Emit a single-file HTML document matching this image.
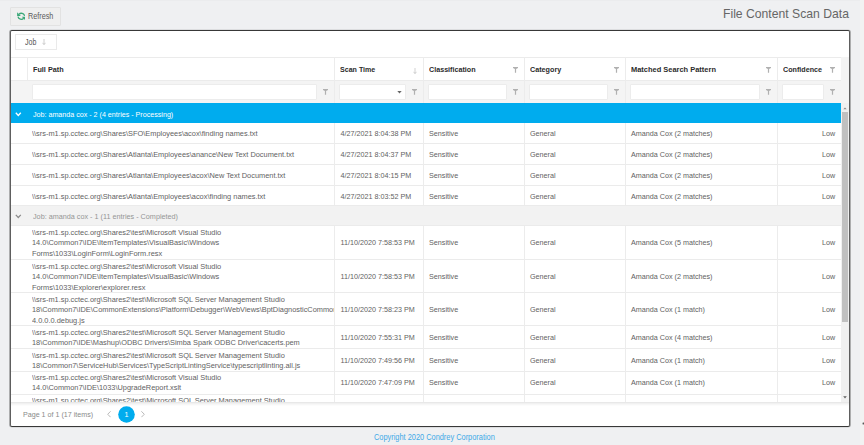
<!DOCTYPE html>
<html><head><meta charset="utf-8"><title>File Content Scan Data</title>
<style>
html,body{margin:0;padding:0}
body{width:864px;height:445px;position:relative;overflow:hidden;background:#eff0f2;font-family:"Liberation Sans",sans-serif}
.r{position:absolute}
.t{position:absolute;white-space:nowrap;line-height:12px;transform-origin:0 0}
</style></head><body>
<div class="r" style="left:0px;top:0px;width:860px;height:1px;background:#ebecee"></div>
<div class="r" style="left:860px;top:0px;width:4px;height:445px;background:#f2f2f2"></div>
<div class="r" style="left:10px;top:7px;width:49px;height:17px;background:#efefef;border:1px solid #e2e2e2;border-radius:1px"></div>
<svg class="r" style="left:16.8px;top:11.7px" width="8.6" height="8.6" viewBox="0 0 8.6 8.6">
<path d="M1.9 2.4 A3.35 3.35 0 0 1 7.65 3.9" fill="none" stroke="#3ba878" stroke-width="1.3"/>
<path d="M6.7 6.2 A3.35 3.35 0 0 1 0.95 4.7" fill="none" stroke="#3ba878" stroke-width="1.3"/>
<path d="M0.1 0.2 L0.1 3.9 L3.8 3.9 Z" fill="#3ba878"/>
<path d="M8.5 8.4 L8.5 4.7 L4.8 4.7 Z" fill="#3ba878"/>
</svg>
<div class="t" style="left:27.8px;top:11px;font-size:8.2px;color:#5a5a5a;transform:scaleX(0.8846);">Refresh</div>
<div class="t" style="left:723.4px;top:8px;font-size:13.4px;color:#666;transform:scaleX(0.9095);">File Content Scan Data</div>
<div class="r" style="left:10px;top:30px;width:838px;height:395px;background:#fff;border:1px solid #383838;border-left-color:#5e5e5e;border-right-color:#5e5e5e;border-radius:2px;box-shadow:-1px 0 0 rgba(0,0,0,0.28),1px 0 0 rgba(0,0,0,0.28),0 -1px 0 rgba(0,0,0,0.08),0 1px 0 rgba(0,0,0,0.08)"></div>
<div class="r" style="left:15px;top:34px;width:40px;height:14px;border:1px solid #eaeaea;background:#fff"></div>
<div class="t" style="left:24.6px;top:37px;font-size:8.2px;color:#565656;transform:scaleX(0.8623);">Job</div>
<svg class="r" style="left:42px;top:39px" width="4" height="6" viewBox="0 0 4 6"><path d="M2 0 V5.6 M0.5 3.8 L2 5.6 L3.5 3.8" fill="none" stroke="#c8c8c8" stroke-width="0.9"/></svg>
<div class="r" style="left:11px;top:57px;width:830px;height:1px;background:#ebebeb"></div>
<div class="r" style="left:11px;top:80px;width:830px;height:1px;background:#ebebeb"></div>
<div class="r" style="left:11px;top:81px;width:830px;height:22px;background:#f4f4f4"></div>
<div class="r" style="left:841px;top:57px;width:8px;height:46px;background:#f4f4f4"></div>
<div class="r" style="left:27px;top:57px;width:1px;height:23px;background:#ececec"></div>
<div class="r" style="left:334px;top:57px;width:1px;height:46px;background:#ececec"></div>
<div class="r" style="left:423px;top:57px;width:1px;height:46px;background:#ececec"></div>
<div class="r" style="left:524px;top:57px;width:1px;height:46px;background:#ececec"></div>
<div class="r" style="left:625px;top:57px;width:1px;height:46px;background:#ececec"></div>
<div class="r" style="left:777px;top:57px;width:1px;height:46px;background:#ececec"></div>
<div class="t" style="left:33px;top:64px;font-size:7.6px;color:#2b2b2b;font-weight:bold;transform:scaleX(0.9536);">Full Path</div>
<div class="r" style="left:32px;top:84px;width:284.5px;height:16px;background:#fff;border:1px solid #ececec;box-sizing:border-box;border-radius:1px"></div>
<svg class="r" style="left:323.0px;top:89.3px" width="5" height="6" viewBox="0 0 5 6"><path d="M0 0 H5 V0.9 L3.1 2.1 V5.8 H1.9 V2.1 L0 0.9 Z" fill="#b0b0b0"/></svg>
<div class="t" style="left:340px;top:64px;font-size:7.6px;color:#2b2b2b;font-weight:bold;transform:scaleX(0.9320);">Scan Time</div>
<svg class="r" style="left:412.5px;top:67.5px" width="4" height="6" viewBox="0 0 4 6"><path d="M2 0 V5.6 M0.5 3.8 L2 5.6 L3.5 3.8" fill="none" stroke="#cccccc" stroke-width="0.9"/></svg>
<div class="r" style="left:339px;top:84px;width:66.5px;height:16px;background:#fff;border:1px solid #ececec;box-sizing:border-box;border-radius:1px"></div>
<svg class="r" style="left:412.0px;top:89.3px" width="5" height="6" viewBox="0 0 5 6"><path d="M0 0 H5 V0.9 L3.1 2.1 V5.8 H1.9 V2.1 L0 0.9 Z" fill="#b0b0b0"/></svg>
<svg class="r" style="left:396.5px;top:91px" width="5" height="3" viewBox="0 0 5 3"><path d="M0.3 0 H4.7 L2.5 2.6 Z" fill="#666"/></svg>
<div class="t" style="left:429px;top:64px;font-size:7.6px;color:#2b2b2b;font-weight:bold;transform:scaleX(0.9430);">Classification</div>
<svg class="r" style="left:513.0px;top:67px" width="5" height="6" viewBox="0 0 5 6"><path d="M0 0 H5 V0.9 L3.1 2.1 V5.8 H1.9 V2.1 L0 0.9 Z" fill="#b0b0b0"/></svg>
<div class="r" style="left:428px;top:84px;width:78.5px;height:16px;background:#fff;border:1px solid #ececec;box-sizing:border-box;border-radius:1px"></div>
<svg class="r" style="left:513.0px;top:89.3px" width="5" height="6" viewBox="0 0 5 6"><path d="M0 0 H5 V0.9 L3.1 2.1 V5.8 H1.9 V2.1 L0 0.9 Z" fill="#b0b0b0"/></svg>
<div class="t" style="left:530px;top:64px;font-size:7.6px;color:#2b2b2b;font-weight:bold;transform:scaleX(0.9474);">Category</div>
<svg class="r" style="left:614.0px;top:67px" width="5" height="6" viewBox="0 0 5 6"><path d="M0 0 H5 V0.9 L3.1 2.1 V5.8 H1.9 V2.1 L0 0.9 Z" fill="#b0b0b0"/></svg>
<div class="r" style="left:529px;top:84px;width:78.5px;height:16px;background:#fff;border:1px solid #ececec;box-sizing:border-box;border-radius:1px"></div>
<svg class="r" style="left:614.0px;top:89.3px" width="5" height="6" viewBox="0 0 5 6"><path d="M0 0 H5 V0.9 L3.1 2.1 V5.8 H1.9 V2.1 L0 0.9 Z" fill="#b0b0b0"/></svg>
<div class="t" style="left:631px;top:64px;font-size:7.6px;color:#2b2b2b;font-weight:bold;transform:scaleX(0.9817);">Matched Search Pattern</div>
<svg class="r" style="left:766.0px;top:67px" width="5" height="6" viewBox="0 0 5 6"><path d="M0 0 H5 V0.9 L3.1 2.1 V5.8 H1.9 V2.1 L0 0.9 Z" fill="#b0b0b0"/></svg>
<div class="r" style="left:630px;top:84px;width:129.5px;height:16px;background:#fff;border:1px solid #ececec;box-sizing:border-box;border-radius:1px"></div>
<svg class="r" style="left:766.0px;top:89.3px" width="5" height="6" viewBox="0 0 5 6"><path d="M0 0 H5 V0.9 L3.1 2.1 V5.8 H1.9 V2.1 L0 0.9 Z" fill="#b0b0b0"/></svg>
<div class="t" style="left:783px;top:64px;font-size:7.6px;color:#2b2b2b;font-weight:bold;transform:scaleX(0.9425);">Confidence</div>
<svg class="r" style="left:830.0px;top:67px" width="5" height="6" viewBox="0 0 5 6"><path d="M0 0 H5 V0.9 L3.1 2.1 V5.8 H1.9 V2.1 L0 0.9 Z" fill="#b0b0b0"/></svg>
<div class="r" style="left:782px;top:84px;width:41.5px;height:16px;background:#fff;border:1px solid #ececec;box-sizing:border-box;border-radius:1px"></div>
<svg class="r" style="left:830.0px;top:89.3px" width="5" height="6" viewBox="0 0 5 6"><path d="M0 0 H5 V0.9 L3.1 2.1 V5.8 H1.9 V2.1 L0 0.9 Z" fill="#b0b0b0"/></svg>
<div class="r" style="left:11px;top:103px;width:830px;height:20px;background:#00acee"></div>
<svg class="r" style="left:15px;top:111.5px" width="7" height="5" viewBox="0 0 7 5"><path d="M0.8 0.8 L3.3 3.5 L5.8 0.8" fill="none" stroke="#fff" stroke-width="1.3"/></svg>
<div class="t" style="left:32.7px;top:109px;font-size:7.4px;color:#fff;transform:scaleX(0.9643);">Job: amanda cox - 2 (4 entries - Processing)</div>
<div class="r" style="left:11px;top:103px;width:830px;height:299px;overflow:hidden">
<div class="t" style="left:21px;top:25px;font-size:7.4px;color:#626262;width:302px;overflow:hidden">\\srs-m1.sp.cctec.org\Shares\SFO\Employees\acox\finding names.txt</div>
<div class="t" style="left:329.5px;top:25px;font-size:7.2px;color:#626262;">4/27/2021 8:04:38 PM</div>
<div class="t" style="left:418px;top:25px;font-size:7.2px;color:#626262;">Sensitive</div>
<div class="t" style="left:519px;top:25px;font-size:7.2px;color:#626262;">General</div>
<div class="t" style="left:620px;top:25px;font-size:7.2px;color:#626262;">Amanda Cox (2 matches)</div>
<div class="t" style="left:766px;width:58.3px;text-align:right;top:25px;font-size:7.2px;color:#626262">Low</div>
<div class="r" style="left:0px;top:40px;width:830px;height:1px;background:#ebebeb"></div>
<div class="r" style="left:323px;top:20px;width:1px;height:20px;background:#ececec"></div>
<div class="r" style="left:412px;top:20px;width:1px;height:20px;background:#ececec"></div>
<div class="r" style="left:513px;top:20px;width:1px;height:20px;background:#ececec"></div>
<div class="r" style="left:614px;top:20px;width:1px;height:20px;background:#ececec"></div>
<div class="r" style="left:766px;top:20px;width:1px;height:20px;background:#ececec"></div>
<div class="t" style="left:21px;top:46px;font-size:7.4px;color:#626262;width:302px;overflow:hidden">\\srs-m1.sp.cctec.org\Shares\Atlanta\Employees\anance\New Text Document.txt</div>
<div class="t" style="left:329.5px;top:46px;font-size:7.2px;color:#626262;">4/27/2021 8:04:37 PM</div>
<div class="t" style="left:418px;top:46px;font-size:7.2px;color:#626262;">Sensitive</div>
<div class="t" style="left:519px;top:46px;font-size:7.2px;color:#626262;">General</div>
<div class="t" style="left:620px;top:46px;font-size:7.2px;color:#626262;">Amanda Cox (2 matches)</div>
<div class="t" style="left:766px;width:58.3px;text-align:right;top:46px;font-size:7.2px;color:#626262">Low</div>
<div class="r" style="left:0px;top:61px;width:830px;height:1px;background:#ebebeb"></div>
<div class="r" style="left:323px;top:40px;width:1px;height:21px;background:#ececec"></div>
<div class="r" style="left:412px;top:40px;width:1px;height:21px;background:#ececec"></div>
<div class="r" style="left:513px;top:40px;width:1px;height:21px;background:#ececec"></div>
<div class="r" style="left:614px;top:40px;width:1px;height:21px;background:#ececec"></div>
<div class="r" style="left:766px;top:40px;width:1px;height:21px;background:#ececec"></div>
<div class="t" style="left:21px;top:67px;font-size:7.4px;color:#626262;width:302px;overflow:hidden">\\srs-m1.sp.cctec.org\Shares\Atlanta\Employees\acox\New Text Document.txt</div>
<div class="t" style="left:329.5px;top:67px;font-size:7.2px;color:#626262;">4/27/2021 8:04:15 PM</div>
<div class="t" style="left:418px;top:67px;font-size:7.2px;color:#626262;">Sensitive</div>
<div class="t" style="left:519px;top:67px;font-size:7.2px;color:#626262;">General</div>
<div class="t" style="left:620px;top:67px;font-size:7.2px;color:#626262;">Amanda Cox (2 matches)</div>
<div class="t" style="left:766px;width:58.3px;text-align:right;top:67px;font-size:7.2px;color:#626262">Low</div>
<div class="r" style="left:0px;top:82px;width:830px;height:1px;background:#ebebeb"></div>
<div class="r" style="left:323px;top:61px;width:1px;height:21px;background:#ececec"></div>
<div class="r" style="left:412px;top:61px;width:1px;height:21px;background:#ececec"></div>
<div class="r" style="left:513px;top:61px;width:1px;height:21px;background:#ececec"></div>
<div class="r" style="left:614px;top:61px;width:1px;height:21px;background:#ececec"></div>
<div class="r" style="left:766px;top:61px;width:1px;height:21px;background:#ececec"></div>
<div class="t" style="left:21px;top:88px;font-size:7.4px;color:#626262;width:302px;overflow:hidden">\\srs-m1.sp.cctec.org\Shares\Atlanta\Employees\acox\finding names.txt</div>
<div class="t" style="left:329.5px;top:88px;font-size:7.2px;color:#626262;">4/27/2021 8:03:52 PM</div>
<div class="t" style="left:418px;top:88px;font-size:7.2px;color:#626262;">Sensitive</div>
<div class="t" style="left:519px;top:88px;font-size:7.2px;color:#626262;">General</div>
<div class="t" style="left:620px;top:88px;font-size:7.2px;color:#626262;">Amanda Cox (2 matches)</div>
<div class="t" style="left:766px;width:58.3px;text-align:right;top:88px;font-size:7.2px;color:#626262">Low</div>
<div class="r" style="left:323px;top:82px;width:1px;height:20px;background:#ececec"></div>
<div class="r" style="left:412px;top:82px;width:1px;height:20px;background:#ececec"></div>
<div class="r" style="left:513px;top:82px;width:1px;height:20px;background:#ececec"></div>
<div class="r" style="left:614px;top:82px;width:1px;height:20px;background:#ececec"></div>
<div class="r" style="left:766px;top:82px;width:1px;height:20px;background:#ececec"></div>
<div class="r" style="left:0px;top:102px;width:830px;height:20px;background:#f2f2f2;border-top:1px solid #ebebeb;box-sizing:border-box"></div>
<div class="r" style="left:0px;top:122px;width:830px;height:1px;background:#ebebeb"></div>
<svg class="r" style="left:4px;top:110.5px" width="7" height="5" viewBox="0 0 7 5"><path d="M0.8 0.8 L3.3 3.5 L5.8 0.8" fill="none" stroke="#8a8a8a" stroke-width="1.2"/></svg>
<div class="t" style="left:21.5px;top:108px;font-size:7.4px;color:#959595;transform:scaleX(0.9788);">Job: amanda cox - 1 (11 entries - Completed)</div>
<div class="t" style="left:21px;top:124px;font-size:7.4px;color:#626262;width:302px;overflow:hidden">\\srs-m1.sp.cctec.org\Shares2\test\Microsoft Visual Studio</div>
<div class="t" style="left:21px;top:134px;font-size:7.4px;color:#626262;width:302px;overflow:hidden">14.0\Common7\IDE\ItemTemplates\VisualBasic\Windows</div>
<div class="t" style="left:21px;top:145px;font-size:7.4px;color:#626262;width:302px;overflow:hidden">Forms\1033\LoginForm\LoginForm.resx</div>
<div class="t" style="left:329.5px;top:134px;font-size:7.2px;color:#626262;">11/10/2020 7:58:53 PM</div>
<div class="t" style="left:418px;top:134px;font-size:7.2px;color:#626262;">Sensitive</div>
<div class="t" style="left:519px;top:134px;font-size:7.2px;color:#626262;">General</div>
<div class="t" style="left:620px;top:134px;font-size:7.2px;color:#626262;">Amanda Cox (5 matches)</div>
<div class="t" style="left:766px;width:58.3px;text-align:right;top:134px;font-size:7.2px;color:#626262">Low</div>
<div class="r" style="left:0px;top:156px;width:830px;height:1px;background:#ebebeb"></div>
<div class="r" style="left:323px;top:123px;width:1px;height:33px;background:#ececec"></div>
<div class="r" style="left:412px;top:123px;width:1px;height:33px;background:#ececec"></div>
<div class="r" style="left:513px;top:123px;width:1px;height:33px;background:#ececec"></div>
<div class="r" style="left:614px;top:123px;width:1px;height:33px;background:#ececec"></div>
<div class="r" style="left:766px;top:123px;width:1px;height:33px;background:#ececec"></div>
<div class="t" style="left:21px;top:158px;font-size:7.4px;color:#626262;width:302px;overflow:hidden">\\srs-m1.sp.cctec.org\Shares2\test\Microsoft Visual Studio</div>
<div class="t" style="left:21px;top:168px;font-size:7.4px;color:#626262;width:302px;overflow:hidden">14.0\Common7\IDE\ItemTemplates\VisualBasic\Windows</div>
<div class="t" style="left:21px;top:179px;font-size:7.4px;color:#626262;width:302px;overflow:hidden">Forms\1033\Explorer\explorer.resx</div>
<div class="t" style="left:329.5px;top:168px;font-size:7.2px;color:#626262;">11/10/2020 7:58:53 PM</div>
<div class="t" style="left:418px;top:168px;font-size:7.2px;color:#626262;">Sensitive</div>
<div class="t" style="left:519px;top:168px;font-size:7.2px;color:#626262;">General</div>
<div class="t" style="left:620px;top:168px;font-size:7.2px;color:#626262;">Amanda Cox (2 matches)</div>
<div class="t" style="left:766px;width:58.3px;text-align:right;top:168px;font-size:7.2px;color:#626262">Low</div>
<div class="r" style="left:0px;top:189px;width:830px;height:1px;background:#ebebeb"></div>
<div class="r" style="left:323px;top:156px;width:1px;height:33px;background:#ececec"></div>
<div class="r" style="left:412px;top:156px;width:1px;height:33px;background:#ececec"></div>
<div class="r" style="left:513px;top:156px;width:1px;height:33px;background:#ececec"></div>
<div class="r" style="left:614px;top:156px;width:1px;height:33px;background:#ececec"></div>
<div class="r" style="left:766px;top:156px;width:1px;height:33px;background:#ececec"></div>
<div class="t" style="left:21px;top:191px;font-size:7.4px;color:#626262;width:302px;overflow:hidden">\\srs-m1.sp.cctec.org\Shares2\test\Microsoft SQL Server Management Studio</div>
<div class="t" style="left:21px;top:201px;font-size:7.4px;color:#626262;width:302px;overflow:hidden">18\Common7\IDE\CommonExtensions\Platform\Debugger\WebViews\BptDiagnosticCommon</div>
<div class="t" style="left:21px;top:212px;font-size:7.4px;color:#626262;width:302px;overflow:hidden">4.0.0.0.debug.js</div>
<div class="t" style="left:329.5px;top:201px;font-size:7.2px;color:#626262;">11/10/2020 7:58:23 PM</div>
<div class="t" style="left:418px;top:201px;font-size:7.2px;color:#626262;">Sensitive</div>
<div class="t" style="left:519px;top:201px;font-size:7.2px;color:#626262;">General</div>
<div class="t" style="left:620px;top:201px;font-size:7.2px;color:#626262;">Amanda Cox (1 match)</div>
<div class="t" style="left:766px;width:58.3px;text-align:right;top:201px;font-size:7.2px;color:#626262">Low</div>
<div class="r" style="left:0px;top:222px;width:830px;height:1px;background:#ebebeb"></div>
<div class="r" style="left:323px;top:189px;width:1px;height:33px;background:#ececec"></div>
<div class="r" style="left:412px;top:189px;width:1px;height:33px;background:#ececec"></div>
<div class="r" style="left:513px;top:189px;width:1px;height:33px;background:#ececec"></div>
<div class="r" style="left:614px;top:189px;width:1px;height:33px;background:#ececec"></div>
<div class="r" style="left:766px;top:189px;width:1px;height:33px;background:#ececec"></div>
<div class="t" style="left:21px;top:224px;font-size:7.4px;color:#626262;width:302px;overflow:hidden">\\srs-m1.sp.cctec.org\Shares2\test\Microsoft SQL Server Management Studio</div>
<div class="t" style="left:21px;top:234px;font-size:7.4px;color:#626262;width:302px;overflow:hidden">18\Common7\IDE\Mashup\ODBC Drivers\Simba Spark ODBC Driver\cacerts.pem</div>
<div class="t" style="left:329.5px;top:229px;font-size:7.2px;color:#626262;">11/10/2020 7:55:31 PM</div>
<div class="t" style="left:418px;top:229px;font-size:7.2px;color:#626262;">Sensitive</div>
<div class="t" style="left:519px;top:229px;font-size:7.2px;color:#626262;">General</div>
<div class="t" style="left:620px;top:229px;font-size:7.2px;color:#626262;">Amanda Cox (4 matches)</div>
<div class="t" style="left:766px;width:58.3px;text-align:right;top:229px;font-size:7.2px;color:#626262">Low</div>
<div class="r" style="left:0px;top:245px;width:830px;height:1px;background:#ebebeb"></div>
<div class="r" style="left:323px;top:222px;width:1px;height:23px;background:#ececec"></div>
<div class="r" style="left:412px;top:222px;width:1px;height:23px;background:#ececec"></div>
<div class="r" style="left:513px;top:222px;width:1px;height:23px;background:#ececec"></div>
<div class="r" style="left:614px;top:222px;width:1px;height:23px;background:#ececec"></div>
<div class="r" style="left:766px;top:222px;width:1px;height:23px;background:#ececec"></div>
<div class="t" style="left:21px;top:247px;font-size:7.4px;color:#626262;width:302px;overflow:hidden">\\srs-m1.sp.cctec.org\Shares2\test\Microsoft SQL Server Management Studio</div>
<div class="t" style="left:21px;top:257px;font-size:7.4px;color:#626262;width:302px;overflow:hidden">18\Common7\ServiceHub\Services\TypeScriptLintingService\typescriptlinting.all.js</div>
<div class="t" style="left:329.5px;top:252px;font-size:7.2px;color:#626262;">11/10/2020 7:49:56 PM</div>
<div class="t" style="left:418px;top:252px;font-size:7.2px;color:#626262;">Sensitive</div>
<div class="t" style="left:519px;top:252px;font-size:7.2px;color:#626262;">General</div>
<div class="t" style="left:620px;top:252px;font-size:7.2px;color:#626262;">Amanda Cox (1 match)</div>
<div class="t" style="left:766px;width:58.3px;text-align:right;top:252px;font-size:7.2px;color:#626262">Low</div>
<div class="r" style="left:0px;top:268px;width:830px;height:1px;background:#ebebeb"></div>
<div class="r" style="left:323px;top:245px;width:1px;height:23px;background:#ececec"></div>
<div class="r" style="left:412px;top:245px;width:1px;height:23px;background:#ececec"></div>
<div class="r" style="left:513px;top:245px;width:1px;height:23px;background:#ececec"></div>
<div class="r" style="left:614px;top:245px;width:1px;height:23px;background:#ececec"></div>
<div class="r" style="left:766px;top:245px;width:1px;height:23px;background:#ececec"></div>
<div class="t" style="left:21px;top:269px;font-size:7.4px;color:#626262;width:302px;overflow:hidden">\\srs-m1.sp.cctec.org\Shares2\test\Microsoft Visual Studio</div>
<div class="t" style="left:21px;top:279px;font-size:7.4px;color:#626262;width:302px;overflow:hidden">14.0\Common7\IDE\1033\UpgradeReport.xslt</div>
<div class="t" style="left:329.5px;top:274px;font-size:7.2px;color:#626262;">11/10/2020 7:47:09 PM</div>
<div class="t" style="left:418px;top:274px;font-size:7.2px;color:#626262;">Sensitive</div>
<div class="t" style="left:519px;top:274px;font-size:7.2px;color:#626262;">General</div>
<div class="t" style="left:620px;top:274px;font-size:7.2px;color:#626262;">Amanda Cox (1 match)</div>
<div class="t" style="left:766px;width:58.3px;text-align:right;top:274px;font-size:7.2px;color:#626262">Low</div>
<div class="r" style="left:0px;top:291px;width:830px;height:1px;background:#ebebeb"></div>
<div class="r" style="left:323px;top:268px;width:1px;height:23px;background:#ececec"></div>
<div class="r" style="left:412px;top:268px;width:1px;height:23px;background:#ececec"></div>
<div class="r" style="left:513px;top:268px;width:1px;height:23px;background:#ececec"></div>
<div class="r" style="left:614px;top:268px;width:1px;height:23px;background:#ececec"></div>
<div class="r" style="left:766px;top:268px;width:1px;height:23px;background:#ececec"></div>
<div class="t" style="left:21px;top:292px;font-size:7.4px;color:#626262;width:302px;overflow:hidden">\\srs-m1.sp.cctec.org\Shares2\test\Microsoft SQL Server Management Studio</div>
<div class="r" style="left:323px;top:292px;width:1px;height:12px;background:#ececec"></div>
<div class="r" style="left:412px;top:292px;width:1px;height:12px;background:#ececec"></div>
<div class="r" style="left:513px;top:292px;width:1px;height:12px;background:#ececec"></div>
<div class="r" style="left:614px;top:292px;width:1px;height:12px;background:#ececec"></div>
<div class="r" style="left:766px;top:292px;width:1px;height:12px;background:#ececec"></div>
</div>
<div class="r" style="left:841px;top:103px;width:8px;height:299px;background:#f0f0f0"></div>
<div class="r" style="left:842px;top:112px;width:6px;height:210px;background:#c0c0c0"></div>
<svg class="r" style="left:843.2px;top:106.8px" width="4" height="3" viewBox="0 0 4 3"><path d="M0.3 2.3 H3.7 L2 0.4 Z" fill="#8a8a8a"/></svg>
<svg class="r" style="left:843.2px;top:396.3px" width="4" height="3" viewBox="0 0 4 3"><path d="M0.2 0.3 H3.8 L2 2.4 Z" fill="#606060"/></svg>
<div class="r" style="left:11px;top:402px;width:838px;height:4px;background:linear-gradient(to bottom, rgba(0,0,0,0.11) 0, rgba(0,0,0,0.05) 40%, rgba(0,0,0,0) 100%)"></div>
<div class="t" style="left:22.8px;top:409px;font-size:7.4px;color:#8a8a8a;transform:scaleX(0.9642);">Page 1 of 1 (17 items)</div>
<svg class="r" style="left:106.5px;top:411px" width="4" height="6.5" viewBox="0 0 4 6.5"><path d="M3.6 0.3 L0.7 3.25 L3.6 6.2" fill="none" stroke="#b8b8b8" stroke-width="1"/></svg>
<svg class="r" style="left:141px;top:411px" width="4" height="6.5" viewBox="0 0 4 6.5"><path d="M0.4 0.3 L3.3 3.25 L0.4 6.2" fill="none" stroke="#b8b8b8" stroke-width="1"/></svg>
<svg class="r" style="left:117.5px;top:405.8px" width="17" height="17" viewBox="0 0 17 17"><circle cx="8.5" cy="8.5" r="8.3" fill="#00acee"/></svg>
<div class="t" style="left:124.4px;top:409px;font-size:7.2px;color:#fff;">1</div>
<div class="r" style="left:861.5px;top:422px;width:3px;height:3px;border-radius:50%;background:radial-gradient(circle, rgba(60,60,60,0.85) 0, rgba(60,60,60,0.2) 70%, rgba(60,60,60,0) 100%)"></div>
<div class="t" style="left:373.9px;top:432px;font-size:8.2px;color:#41a9e7;transform:scaleX(0.9029);">Copyright 2020 Condrey Corporation</div>
</body></html>
